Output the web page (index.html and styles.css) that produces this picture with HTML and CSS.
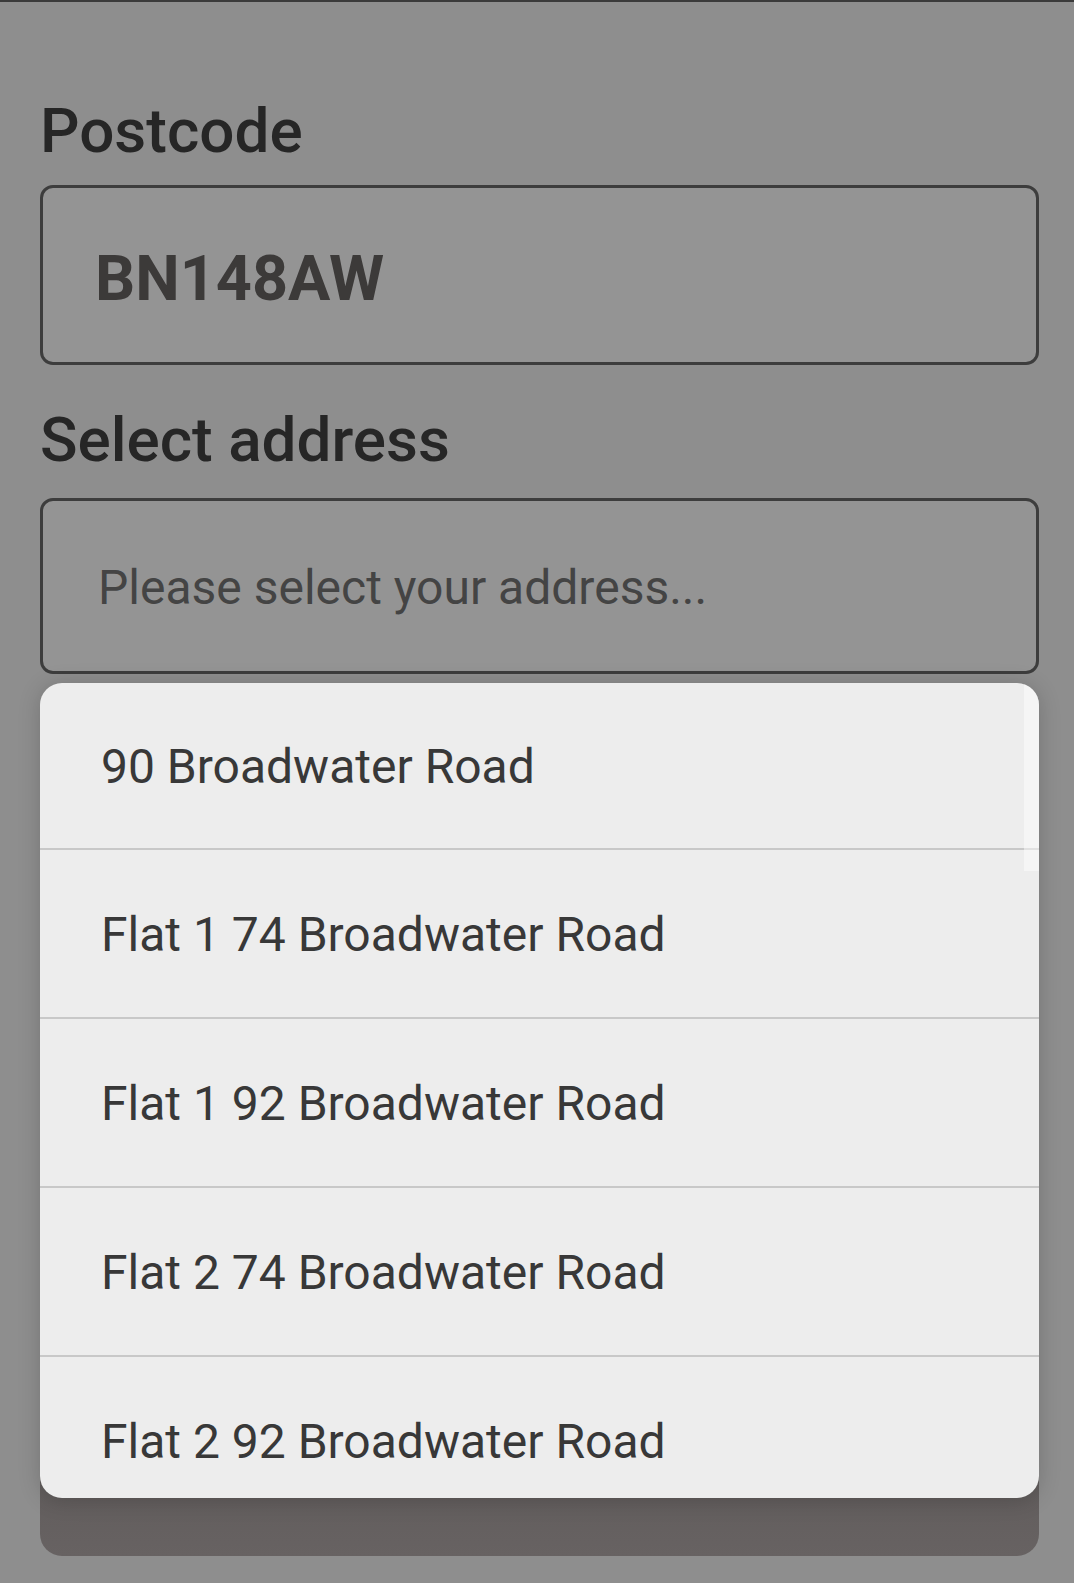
FILE: index.html
```html
<!DOCTYPE html>
<html lang="en">
<head>
<meta charset="utf-8">
<title>Address lookup</title>
<link rel="stylesheet" href="styles.css">
</head>
<body>
<main class="form">
  <label class="label label-postcode" for="postcode">Postcode</label>
  <div class="field field-postcode" id="postcode">BN148AW</div>

  <label class="label label-address">Select address</label>
  <div class="select-wrap">
    <div class="field field-select">Please select your address...</div>
    <div class="dropdown">
      <ul class="options">
        <li class="option">90 Broadwater Road</li>
        <li class="option">Flat 1 74 Broadwater Road</li>
        <li class="option">Flat 1 92 Broadwater Road</li>
        <li class="option">Flat 2 74 Broadwater Road</li>
        <li class="option">Flat 2 92 Broadwater Road</li>
      </ul>
      <div class="scroll-thumb"></div>
    </div>
  </div>

  <div class="action-button"></div>
</main>
</body>
</html>
```

FILE: styles.css
```css
html, body {
  margin: 0;
  padding: 0;
}

body {
  background: #8e8e8e;
  border-top: 2px solid #3b3b3b;
  min-height: 1581px;
  font-family: Roboto, "Liberation Sans", sans-serif;
  overflow: hidden;
}

.form {
  display: flex;
  flex-direction: column;
  padding: 91px 35px 0 40px;
}

.label {
  display: block;
  font-size: 62px;
  line-height: 76px;
  font-weight: 500;
  color: #262626;
}

.label-address {
  margin-top: 37px;
}

.field {
  box-sizing: border-box;
  display: flex;
  align-items: center;
  border: 3px solid #3d3d3d;
  border-radius: 13px;
  background: #949494;
}

.field-postcode {
  margin-top: 16px;
  height: 180px;
  padding: 7px 0 0 52px;
  font-size: 63px;
  font-weight: 700;
  color: #3c3a39;
}

.select-wrap {
  position: relative;
  margin-top: 20px;
}

.field-select {
  height: 176px;
  padding: 3px 0 0 55px;
  font-size: 48px;
  font-weight: 400;
  color: #444444;
}

.dropdown {
  position: absolute;
  top: calc(100% + 9px);
  left: 0;
  right: 0;
  height: 815px;
  overflow: hidden;
  background: #ededed;
  border-radius: 22px;
  box-shadow: 0 2px 22px rgba(0, 0, 0, 0.18);
  z-index: 2;
}

.options {
  list-style: none;
  margin: 0;
  padding: 0;
}

.option {
  box-sizing: border-box;
  display: flex;
  align-items: center;
  height: 165px;
  padding: 2px 0 0 61px;
  font-size: 48px;
  font-weight: 400;
  color: #383838;
}

.option + .option {
  height: 169px;
  border-top: 2px solid #c8c8c8;
}

.scroll-thumb {
  position: absolute;
  top: 0;
  right: 0;
  width: 15px;
  height: 188px;
  background: rgba(255, 255, 255, 0.45);
}

.action-button {
  margin-top: 722px;
  height: 160px;
  border-radius: 22px;
  background: linear-gradient(#5b5756, #676262);
}
```
